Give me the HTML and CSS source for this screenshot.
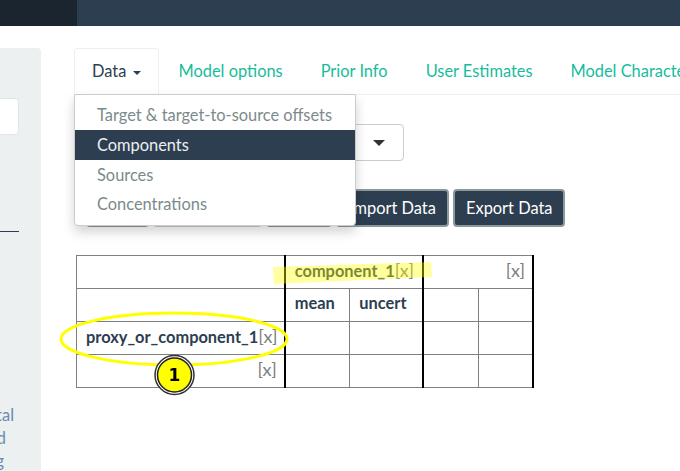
FILE: index.html
```html
<!DOCTYPE html>
<html lang="en">
<head>
    <meta charset="UTF-8">
    <meta name="viewport" content="width=device-width, initial-scale=1.0">
    <title>Data</title>
    <link rel="stylesheet" href="styles.css">
</head>
<body>

    <div class="navbar">
        <div class="brand"></div>
    </div>

    <div class="layout">
        <div class="sidebar">
            <div class="sidebar-inner">
                <div class="sidebar-input"></div>
                <div class="sidebar-rule"></div>
                <div class="sidebar-note">
                    <div class="note-a">Total</div>
                    <div class="note-b">and</div>
                    <div class="note-c">using</div>
                </div>
            </div>
        </div>

        <div class="main">
            <ul class="tabs">
                <li class="tab active">
                    <a>Data <span class="caret"></span></a>
                    <ul class="dropdown">
                        <li>Target &amp; target-to-source offsets</li>
                        <li class="selected">Components</li>
                        <li>Sources</li>
                        <li>Concentrations</li>
                    </ul>
                </li>
                <li class="tab"><a>Model options</a></li>
                <li class="tab"><a>Prior Info</a></li>
                <li class="tab"><a>User Estimates</a></li>
                <li class="tab"><a>Model Characteristics</a></li>
            </ul>

            <div class="select-box"><span class="select-arrow"></span></div>

            <div class="buttons">
                <button class="btn btn-a">Save</button>
                <button class="btn btn-b">Load</button>
                <button class="btn btn-c">Reset</button>
                <button class="btn btn-d">Import Data</button>
                <button class="btn">Export Data</button>
            </div>

            <table class="grid">
                <colgroup>
                    <col class="col-name">
                    <col class="col-mean">
                    <col class="col-uncert">
                    <col class="col-extra-a">
                    <col class="col-extra-b">
                </colgroup>
                <tr>
                    <td></td>
                    <td class="thick name" colspan="2">component_1<span class="remove">[x]</span></td>
                    <td class="thick right" colspan="2"><span class="remove">[x]</span></td>
                </tr>
                <tr>
                    <td></td>
                    <td class="thick name">mean</td>
                    <td class="name">uncert</td>
                    <td class="thick"></td>
                    <td class="end"></td>
                </tr>
                <tr>
                    <td class="right name">proxy_or_component_1<span class="remove">[x]</span></td>
                    <td class="thick"></td>
                    <td></td>
                    <td class="thick"></td>
                    <td class="end"></td>
                </tr>
                <tr>
                    <td class="right"><span class="remove">[x]</span></td>
                    <td class="thick"></td>
                    <td></td>
                    <td class="thick"></td>
                    <td class="end"></td>
                </tr>
            </table>
        </div>
    </div>

    <!-- Annotations drawn on top of the screenshot -->
    <svg class="marks" width="680" height="471" viewBox="0 0 680 471">
        <polygon class="mark-highlight" points="273,267 431,262 432,277 274,284"/>
        <ellipse class="mark-ellipse" cx="174" cy="339" rx="113" ry="26"/>
        <circle class="mark-outer" cx="174.5" cy="375" r="19.5"/>
        <circle class="mark-inner" cx="174.5" cy="375" r="17"/>
        <text class="mark-number" x="174.5" y="381">1</text>
    </svg>

</body>
</html>
```

FILE: styles.css
```css
body {
    margin: 0;
    height: 471px;
    overflow: hidden;
    position: relative;
    font-family: Lato, "Liberation Sans", sans-serif;
    font-size: 16.4px;
    line-height: 24px;
    color: #2c3e50;
    background: #fff;
}

.navbar {
    height: 26px;
    background: #2c3e50;
}

.brand {
    width: 77px;
    height: 26px;
    background: #1a252f;
}

.layout {
    display: flex;
    margin-top: 22px;
}

.sidebar {
    width: 41px;
    height: 423px;
    flex: none;
    overflow: hidden;
    background: #ecf0f1;
    border-top-right-radius: 4px;
}

.sidebar-inner {
    width: 200px;
    margin-left: -181px;
    padding-top: 50px;
}

.sidebar-input {
    height: 35px;
    background: #fff;
    border: 1px solid #dce4ec;
    border-radius: 4px;
}

.sidebar-rule {
    height: 1px;
    margin-top: 96px;
    background: #2c3e50;
}

.sidebar-note {
    margin-top: 171px;
    width: 195px;
    line-height: 23px;
    text-align: right;
    color: #6a8cad;
}

.note-b {
    padding-right: 8px;
}

.note-c {
    padding-right: 10px;
}

.main {
    flex: 1;
    min-width: 0;
    margin-left: 33px;
    overflow: hidden;
}

.tabs {
    display: flex;
    margin: 0;
    padding: 0;
    list-style: none;
    white-space: nowrap;
    border-bottom: 1px solid #ecf0f1;
}

.tab {
    margin-right: 2px;
    padding: 10px 17px;
    border: 1px solid transparent;
    color: #18bc9c;
}

.tab.active {
    color: #2c3e50;
    border-color: #ecf0f1;
    border-bottom-color: #fff;
    border-radius: 4px 4px 0 0;
}

.caret {
    display: inline-block;
    margin-left: 2px;
    vertical-align: middle;
    border-top: 4px solid #2c3e50;
    border-left: 4px solid transparent;
    border-right: 4px solid transparent;
}

.dropdown {
    position: absolute;
    z-index: 5;
    left: 74px;
    top: 94px;
    width: 280px;
    margin: 0;
    padding: 5px 0 6px;
    list-style: none;
    background: #fff;
    border: 1px solid #ccc;
    border-radius: 0 0 4px 4px;
    box-shadow: 0 6px 12px rgba(0, 0, 0, 0.175);
    color: #7b8a8b;
}

.dropdown li {
    padding: 0 22px;
    height: 29.75px;
    line-height: 29.25px;
}

.dropdown .selected {
    background: #2c3e50;
    color: #ecf0f1;
}

.select-box {
    display: flex;
    align-items: center;
    justify-content: flex-end;
    box-sizing: border-box;
    width: 319px;
    height: 37px;
    margin: 29px 0 0 11px;
    padding-right: 18px;
    border: 1px solid #ccc;
    border-radius: 4px;
}

.select-arrow {
    border-top: 6px solid #333;
    border-left: 6px solid transparent;
    border-right: 6px solid transparent;
}

.buttons {
    display: flex;
    gap: 4px;
    margin: 28px 0 0 12px;
}

.btn {
    box-sizing: border-box;
    height: 38px;
    padding: 0 11px;
    font: inherit;
    white-space: nowrap;
    color: #fff;
    background: #2c3e50;
    border: 2px solid #8a9a9b;
    border-radius: 4px;
}

.btn-a {
    width: 63px;
}

.btn-b {
    width: 109px;
    background: #fff;
    border-color: #ccc;
    color: #2c3e50;
}

.btn-c {
    width: 66px;
}

.btn-d {
    width: 113px;
}

.grid {
    table-layout: fixed;
    width: 458px;
    margin: 28px 0 0 2px;
    border-collapse: collapse;
}

.grid td {
    height: 33px;
    padding: 0 7px 4px 9px;
    border: 1px solid #808080;
    box-sizing: border-box;
}

.grid td.thick {
    border-left: 2px solid #000;
}

.grid tr > td:last-child {
    border-right: 2px solid #000;
}

.col-name {
    width: 208px;
}

.col-mean {
    width: 65px;
}

.col-uncert {
    width: 73px;
}

.col-extra-a {
    width: 56px;
}

.col-extra-b {
    width: 54px;
}

.name {
    font-weight: 700;
}

.right {
    text-align: right;
}

.remove {
    font-size: 18px;
    font-weight: 400;
    color: #808080;
}

.marks {
    position: absolute;
    z-index: 3;
    left: 0;
    top: 0;
    pointer-events: none;
}

.mark-highlight {
    fill: #ffff00;
    opacity: 0.38;
    mix-blend-mode: multiply;
}

.mark-ellipse {
    fill: none;
    stroke: #ffff00;
    stroke-width: 3;
}

.mark-outer {
    fill: #fff;
    stroke: #333;
    stroke-width: 1.5;
}

.mark-inner {
    fill: #ffff00;
    stroke: #222;
    stroke-width: 1.5;
}

.mark-number {
    font-family: "DejaVu Sans", sans-serif;
    font-size: 17px;
    font-weight: 700;
    text-anchor: middle;
    fill: #000;
}
```
